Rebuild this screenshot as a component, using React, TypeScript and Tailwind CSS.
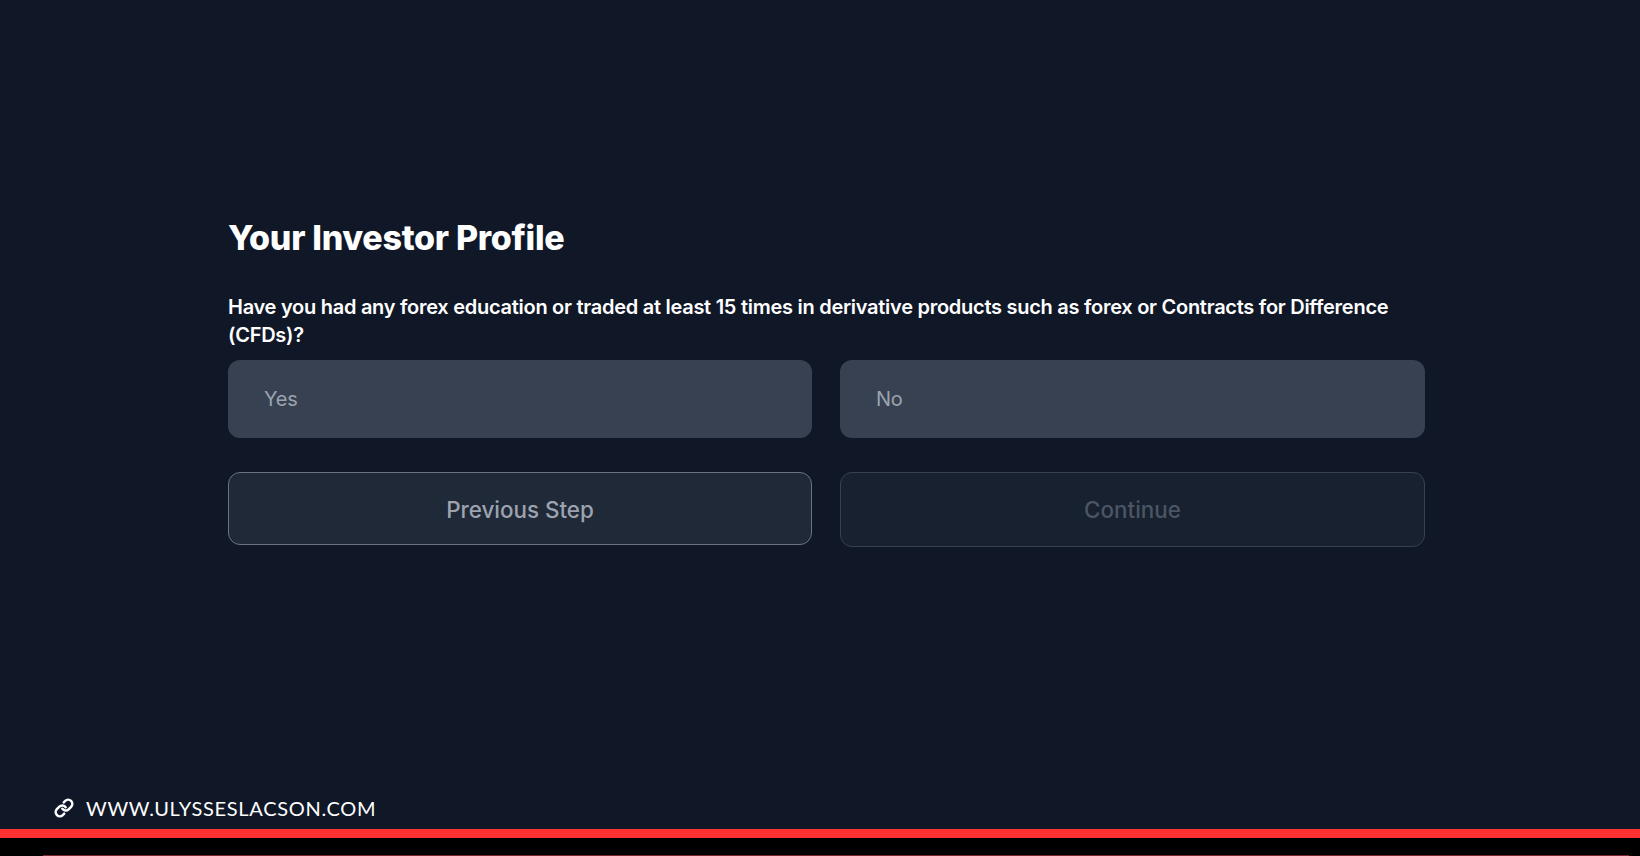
import { Link } from "lucide-react";

const App = () => {
  return (
    <div className="h-[856px] w-[1640px] overflow-hidden bg-[#101828] flex flex-col font-['Inter',sans-serif]">
      <div className="flex-1 pl-[228px] pr-[215px] pt-[216px]">
        <h1 className="text-[34px] leading-[44px] font-extrabold tracking-[-0.3px] text-white">Your Investor Profile</h1>
        <p className="mt-[33px] text-[20px] leading-[28px] font-semibold tracking-[-0.27px] text-white">
          Have you had any forex education or traded at least 15 times in derivative products such as forex or
          Contracts for Difference (CFDs)?
        </p>
        <div className="mt-[11px] grid grid-cols-[584px_585px] gap-[28px]">
          <button className="h-[78px] rounded-xl bg-[#374151] px-9 text-left text-[20px] tracking-[-0.2px] text-[#9ca3af]">Yes</button>
          <button className="h-[78px] rounded-xl bg-[#374151] px-9 text-left text-[20px] tracking-[-0.2px] text-[#9ca3af]">No</button>
        </div>
        <div className="mt-[34px] grid grid-cols-[584px_585px] gap-[28px] items-start">
          <button className="h-[73px] rounded-xl border border-[#6b7280] bg-[#1f2937] pt-[3px] text-[22.4px] font-medium text-[#9ca3af]">
            Previous Step
          </button>
          <button className="h-[75px] rounded-xl border border-[#374151] bg-[#18212f] pt-[1px] text-[22.4px] font-medium text-[#4b5563]">
            Continue
          </button>
        </div>
      </div>
      <div className="flex items-center gap-3 pl-[54px] pb-[9px] text-white">
        <Link size={20} strokeWidth={3} />
        <span className="font-['Lato',sans-serif] text-[20px] leading-[24px] tracking-[0.7px]">WWW.ULYSSESLACSON.COM</span>
      </div>
      <div className="h-[9px] bg-[#ff3131]" />
      <div className="h-[18px] bg-black flex flex-col justify-end">
        <div className="ml-[43px] w-[1586px] h-px bg-[#7a2a2e]" />
      </div>
    </div>
  );
};

export default App;
